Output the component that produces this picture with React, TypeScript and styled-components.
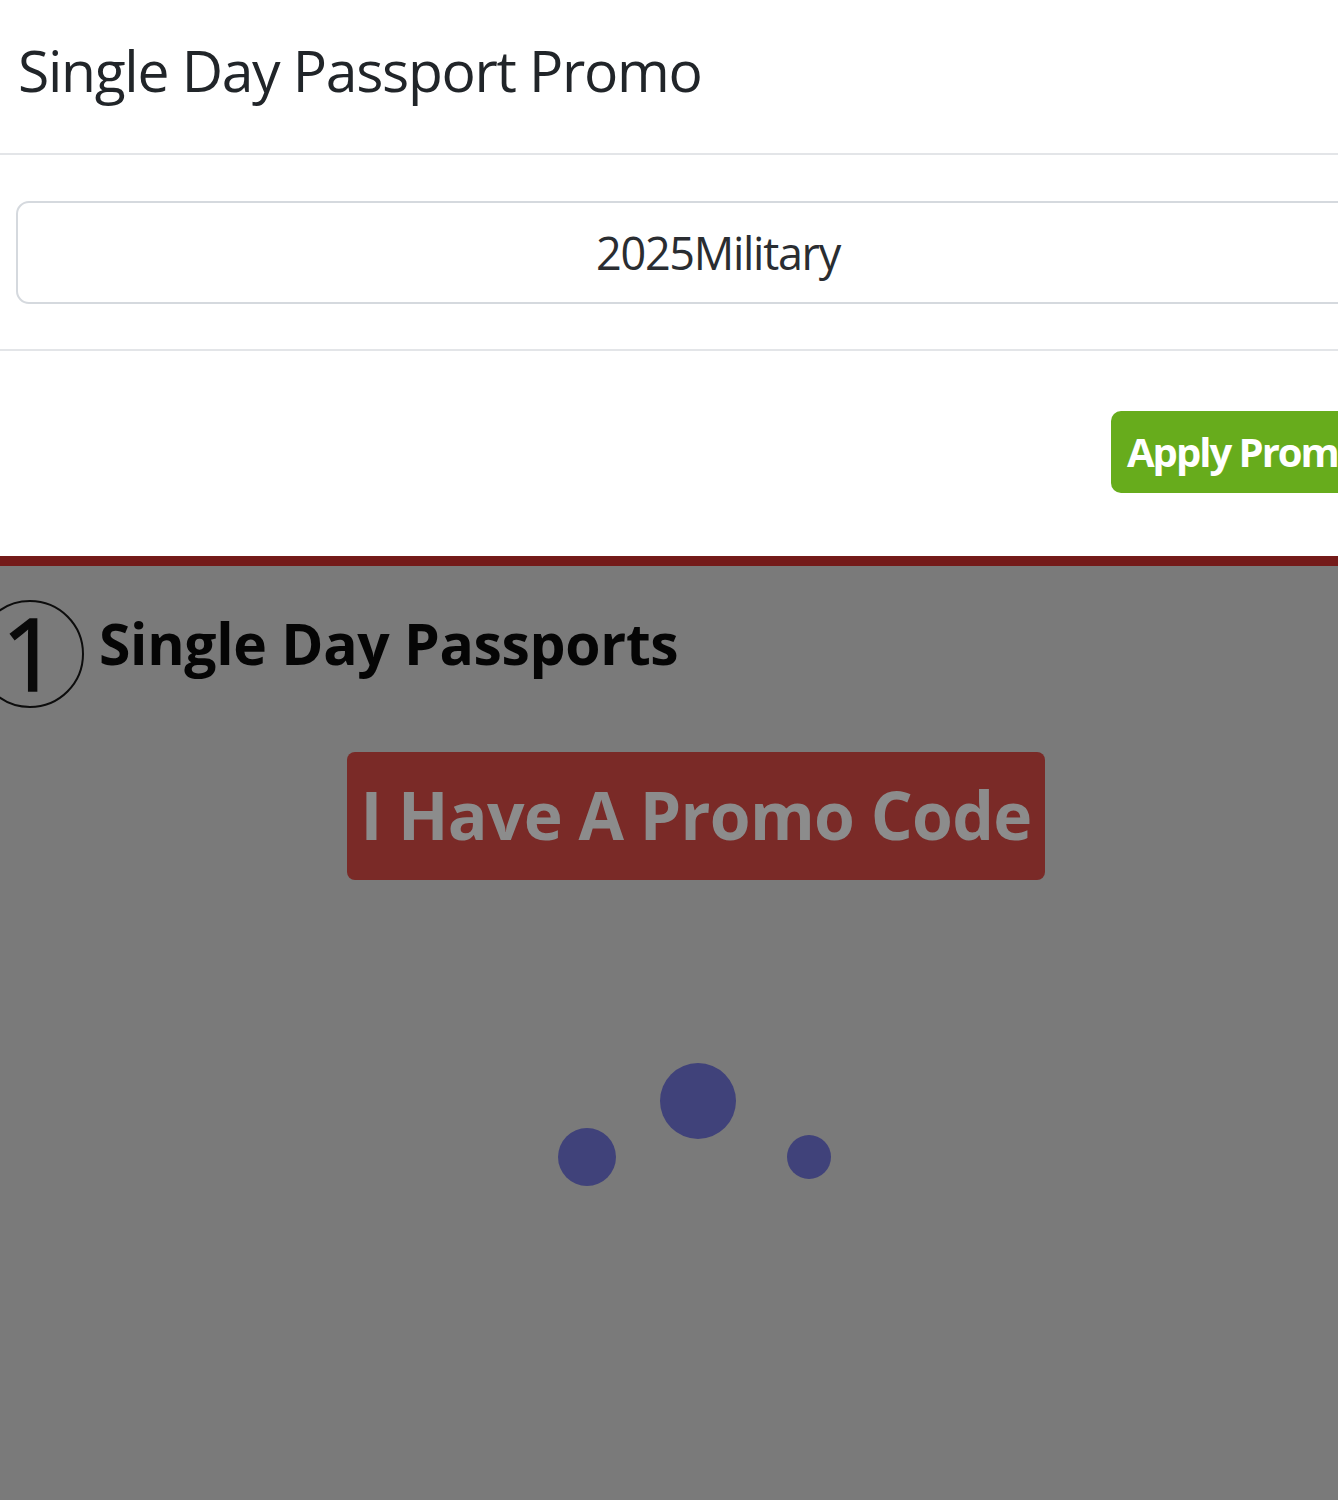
import React from "react";
import styled, { createGlobalStyle } from "styled-components";

const Global = createGlobalStyle`
  html, body { margin: 0; padding: 0; background: #7a7a7a; }
  body { overflow: hidden; font-family: "Open Sans", "Noto Sans", sans-serif; }
`;

const Viewport = styled.div`
  width: 100%;
  height: 1500px;
  overflow: hidden;
  display: flex;
  flex-direction: column;
`;

const Modal = styled.div`
  width: 1436px;
  flex-shrink: 0;
  background: #ffffff;
  display: flex;
  flex-direction: column;
`;

const ModalHeader = styled.div`
  height: 155px;
  box-sizing: border-box;
  padding: 0 18px;
  display: flex;
  align-items: center;
  border-bottom: 2px solid #e3e5e8;
`;

const ModalTitle = styled.h5`
  margin: 0;
  margin-top: -14px;
  font-family: "Open Sans", sans-serif;
  font-weight: 400;
  font-size: 57px;
  letter-spacing: -1.3px;
  color: #212529;
`;

const ModalBody = styled.div`
  height: 196px;
  box-sizing: border-box;
  padding: 46px 16px 0;
  border-bottom: 2px solid #e3e5e8;
`;

const PromoInput = styled.input`
  width: 100%;
  height: 103px;
  box-sizing: border-box;
  border: 2px solid #d5d9de;
  border-radius: 13px;
  text-align: center;
  font-family: "Open Sans", sans-serif;
  font-size: 45px;
  letter-spacing: -1.3px;
  color: #2a2d31;
  outline: none;
  background: #fff;
`;

const ModalFooter = styled.div`
  height: 205px;
  box-sizing: border-box;
  padding: 60px 16px 0;
  display: flex;
  justify-content: flex-end;
  align-items: flex-start;
`;

const ApplyButton = styled.button`
  height: 82px;
  width: 309px;
  border: none;
  border-radius: 10px;
  background: #67ac1c;
  color: #ffffff;
  font-family: "Open Sans", sans-serif;
  font-weight: 700;
  font-size: 40px;
  letter-spacing: -2px;
  text-align: left;
  padding: 0 0 2px 16px;
  white-space: nowrap;
`;

const DimmedPage = styled.div`
  flex: 1;
  border-top: 10px solid #741a19;
  background: #7a7a7a;
  display: flex;
  flex-direction: column;
`;

const StepHeader = styled.div`
  display: flex;
  align-items: center;
  gap: 15px;
  margin-top: 34px;
  margin-left: -24px;
`;

const StepCircle = styled.div`
  width: 108px;
  height: 108px;
  border: 2.5px solid #0c0c0c;
  border-radius: 50%;
  box-sizing: border-box;
  display: flex;
  align-items: center;
  justify-content: center;
  font-family: "Open Sans", sans-serif;
  font-weight: 400;
  font-size: 100px;
  line-height: 1;
  color: #0a0a0a;
  padding-bottom: 4px;
  -webkit-text-stroke: 1.5px #0a0a0a;
`;

const StepTitle = styled.h2`
  margin: 0;
  margin-top: -22px;
  font-family: "Open Sans", sans-serif;
  font-weight: 700;
  font-size: 57px;
  letter-spacing: -0.3px;
  color: #050505;
`;

const PromoRow = styled.div`
  display: flex;
  justify-content: center;
  margin-top: 44px;
  padding-left: 54px;
`;

const PromoButton = styled.button`
  width: 698px;
  height: 128px;
  border: none;
  border-radius: 8px;
  background: #7a2a27;
  color: #8c8c8c;
  font-family: "Open Sans", sans-serif;
  font-weight: 700;
  font-size: 66px;
  letter-spacing: -0.7px;
  padding: 0 0 4px;
  white-space: nowrap;
`;

const Spinner = styled.div`
  display: grid;
  grid-template-columns: repeat(3, 111px);
  justify-content: center;
  align-items: center;
  margin-top: 239px;
  padding-left: 58px;
  height: 76px;
`;

const Dot = styled.span<{ $size: number; $lift: number }>`
  justify-self: center;
  width: ${(p) => p.$size}px;
  height: ${(p) => p.$size}px;
  border-radius: 50%;
  background: #40427a;
  transform: translateY(${(p) => -p.$lift}px);
`;

export default function App() {
  return (
    <>
      <Global />
      <Viewport>
        <Modal>
          <ModalHeader>
            <ModalTitle>Single Day Passport Promo</ModalTitle>
          </ModalHeader>
          <ModalBody>
            <PromoInput defaultValue="2025Military" readOnly />
          </ModalBody>
          <ModalFooter>
            <ApplyButton>Apply Promo</ApplyButton>
          </ModalFooter>
        </Modal>
        <DimmedPage>
          <StepHeader>
            <StepCircle>1</StepCircle>
            <StepTitle>Single Day Passports</StepTitle>
          </StepHeader>
          <PromoRow>
            <PromoButton>I Have A Promo Code</PromoButton>
          </PromoRow>
          <Spinner>
            <Dot $size={58} $lift={0} />
            <Dot $size={76} $lift={56} />
            <Dot $size={44} $lift={0} />
          </Spinner>
        </DimmedPage>
      </Viewport>
    </>
  );
}
